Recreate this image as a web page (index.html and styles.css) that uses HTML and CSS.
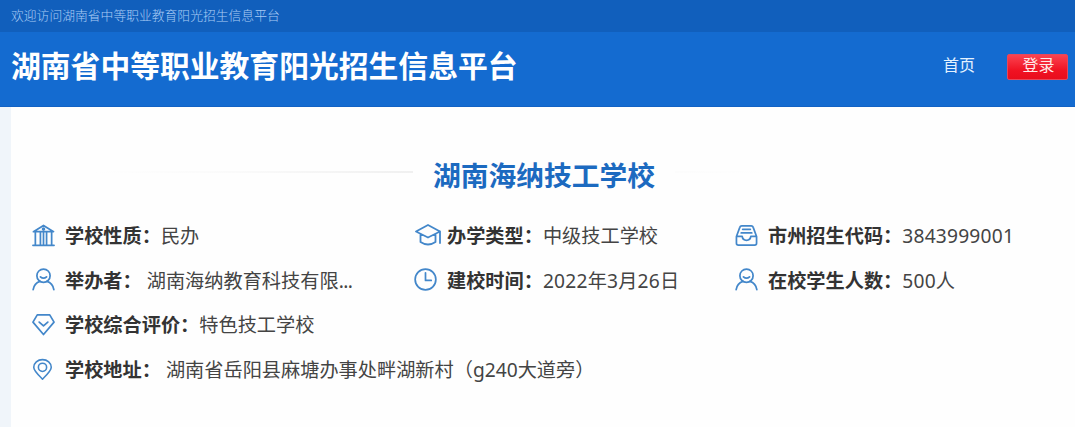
FILE: index.html
```html
<!DOCTYPE html>
<html lang="zh-CN">
<head>
<meta charset="utf-8">
<title>湖南省中等职业教育阳光招生信息平台</title>
<link rel="stylesheet" href="styles.css">
</head>
<body>
<svg class="defs" width="0" height="0">
  <symbol id="person" viewBox="0 0 24 24">
    <circle cx="12" cy="8" r="6.900"/>
    <path d="M1.200 22.500C2 17.600 4.800 15 8.400 13.900M22.800 22.500C22 17.600 19.200 15 15.600 13.900M8.800 9.200Q12 12 15.200 9.200"/>
  </symbol>
</svg>
<div class="topbar">欢迎访问湖南省中等职业教育阳光招生信息平台</div>
<header class="header">
  <h1 class="brand">湖南省中等职业教育阳光招生信息平台</h1>
  <nav class="nav">
    <a class="home">首页</a>
    <a class="login">登录</a>
  </nav>
</header>
<main class="card">
  <div class="heading">
    <span class="rule"></span>
    <h2 class="school">湖南海纳技工学校</h2>
    <span class="rule rule-right"></span>
  </div>
  <div class="info">
    <div class="item">
      <svg class="icon" viewBox="0 0 24 24"><path d="M1.500 8 12 1.500 22.500 8ZM3.500 8V21.500M8.800 8V21.500M15.200 8V21.500M20.500 8V21.500M12 8V21.500M1 22.300H23"/><circle cx="12" cy="5.300" r="1"/></svg>
      <b class="label">学校性质：</b><span class="value">民办</span>
    </div>
    <div class="item">
      <svg class="icon cap" viewBox="0 0 28 24"><path d="M2 8.500 14 2 26 8.500 14 14.500ZM6.500 11V19Q14 24 21.500 19V11M26 8.500V20"/></svg>
      <b class="label">办学类型：</b><span class="value">中级技工学校</span>
    </div>
    <div class="item">
      <svg class="icon" viewBox="0 0 24 24"><path d="M1.500 13 5 3.500Q5.500 2 7 2H17Q18.500 2 19 3.500L22.500 13V20Q22.500 22 20.500 22H3.500Q1.500 22 1.500 20ZM1.500 13H7.500Q8 17 12 17T16.500 13H22.500M8 5.500H16M6.500 9.300H17.500"/></svg>
      <b class="label">市州招生代码：</b><span class="value number">3843999001</span>
    </div>
    <div class="item">
      <svg class="icon"><use href="#person"/></svg>
      <b class="label">举办者：</b><span class="value spaced">湖南海纳教育科技有限<span class="dots">...</span></span>
    </div>
    <div class="item">
      <svg class="icon" viewBox="0 0 24 24"><circle cx="12" cy="12" r="10.800"/><path d="M12 5V13H18"/></svg>
      <b class="label">建校时间：</b><span class="value number">2022年3月26日</span>
    </div>
    <div class="item">
      <svg class="icon"><use href="#person"/></svg>
      <b class="label">在校学生人数：</b><span class="value number">500人</span>
    </div>
    <div class="item wide">
      <svg class="icon" viewBox="0 0 24 24"><path d="M5.500 2H18.500L23 9.500 12 22.500 1 9.500ZM7.500 9.500 12 13.500 16.500 9.500"/></svg>
      <b class="label">学校综合评价：</b><span class="value">特色技工学校</span>
    </div>
    <div class="item wide">
      <svg class="icon pin" viewBox="0 0 24 24"><path d="M12 23C6 17 2 13.500 2 9.500A10 8.800 0 0 1 22 9.500C22 13.500 18 17 12 23Z"/><circle cx="12" cy="9.500" r="4.700"/></svg>
      <b class="label">学校地址：</b><span class="value spaced">湖南省岳阳县麻塘办事处畔湖新村（g240大道旁）</span>
    </div>
  </div>
</main>
</body>
</html>
```

FILE: styles.css
```css
* { box-sizing: border-box; }

body {
  margin: 0;
  height: 427px;
  overflow: hidden;
  background: #f0f5fa;
  font-family: "Noto Sans", "Noto Sans CJK SC", sans-serif;
  color: #333;
}

.defs { position: absolute; }

.topbar {
  height: 32px;
  padding-left: 11px;
  background: #115fbc;
  color: #a9ccf5;
  font-size: 12.8px;
  font-weight: 300;
  line-height: 31px;
}

.header {
  display: flex;
  justify-content: space-between;
  height: 75px;
  padding: 0 7px 0 11px;
  background: #146bd0;
  border-bottom: 1px solid #1262c4;
  color: #fff;
}

.brand {
  margin: 0;
  font-size: 29.8px;
  font-weight: 700;
  line-height: 67px;
}

.nav {
  display: flex;
  align-items: flex-start;
  gap: 32px;
  padding-top: 22px;
  font-size: 16px;
  line-height: 22px;
}

.home { color: #e4f2ff; }

.login {
  width: 61px;
  height: 26px;
  padding-left: 2px;
  border: 1px solid #e4485c;
  border-radius: 2px;
  background: linear-gradient(#fa4350, #f01222 65%, #e90d1c);
  color: #ffe9e6;
  line-height: 20px;
  text-align: center;
}

.card {
  height: 320px;
  margin-left: 11px;
  padding: 46px 0 0 21px;
  background: #fefefe;
}

.heading {
  display: flex;
  align-items: center;
  gap: 20px;
  height: 44px;
  padding-left: 61px;
}

.rule {
  width: 320px;
  height: 2px;
  margin-top: -7px;
  background: linear-gradient(to right, #fefefe, #fafafa 45%, #f0f0f0);
}

.rule-right {
  width: 100px;
  background: linear-gradient(to right, #fcfcfc, #fefefe);
}

.school {
  margin: 0;
  color: #1c6ac0;
  font-size: 27.75px;
  font-weight: 700;
  line-height: 44px;
  white-space: nowrap;
}

.info {
  display: grid;
  grid-template-columns: 382px 321px 1fr;
  grid-auto-rows: 44.6px;
  margin-top: 17px;
}

.item {
  display: flex;
  align-items: center;
  font-size: 19.2px;
  line-height: 28px;
  white-space: nowrap;
}

.wide { grid-column: 1 / -1; }

.icon {
  flex: none;
  width: 23px;
  height: 23px;
  margin: 0 10px 2px 0;
  fill: none;
  stroke: #4387ca;
  stroke-width: 1.8;
  stroke-linecap: round;
  stroke-linejoin: round;
}

.cap {
  width: 28px;
  height: 24px;
  margin-right: 5px;
}

.pin {
  width: 21px;
  margin-right: 12px;
}

.label { font-weight: 700; }

.value {
  color: #444;
  font-weight: 400;
}

.number { letter-spacing: 0.2px; }

.dots { letter-spacing: -0.6px; }

.spaced { margin-left: 5px; }
```
